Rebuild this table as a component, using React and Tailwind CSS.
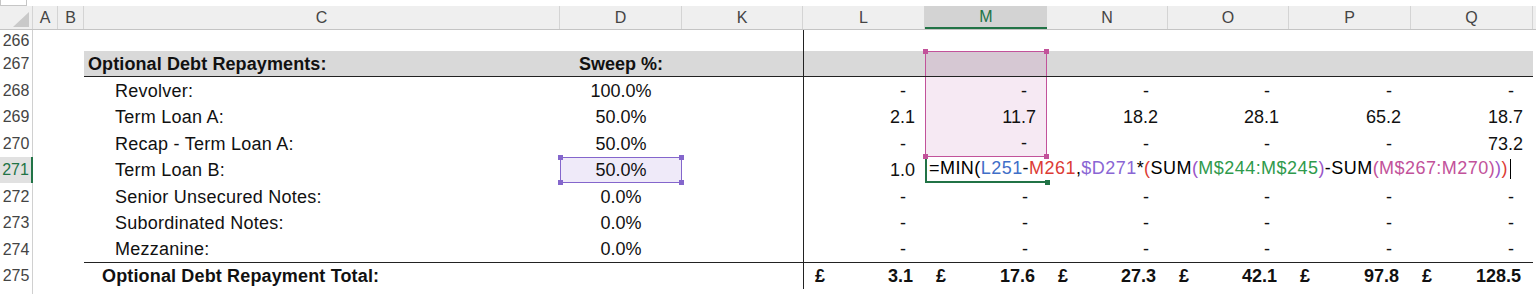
import React from "react";

const VW = ["w-[122px]", "w-[122px]", "w-[121px]", "w-[121px]", "w-[122px]", "w-[122px]"];
const PINK = "border-[#c2529a]";

function RowHead({ n, active }) {
  return active ? (
    <div className="w-[33px] shrink-0 flex items-center justify-center bg-[#e1e1e1] border-r-2 border-[#217346] text-[#217346] text-[16px]">
      {n}
    </div>
  ) : (
    <div className="w-[33px] shrink-0 flex items-center justify-center bg-white border-r border-[#d0d0d0] text-[#444] text-[16px]">
      {n}
    </div>
  );
}

function Handle({ cls }) {
  return <div className={`absolute w-[5px] h-[5px] z-20 ${cls}`} />;
}

function Val({ w, v, extra = "", children }) {
  const dash = v === "-";
  return (
    <div className={`${w} shrink-0 relative flex items-center justify-end ${dash ? "pr-[19px]" : "pr-[10px]"} ${extra}`}>
      {v}
      {children}
    </div>
  );
}

function Blank() {
  return (
    <>
      <div className="w-[25px] shrink-0" />
      <div className="w-[26px] shrink-0" />
    </>
  );
}

const body = [
  { n: 268, h: "h-[27px]", label: "Revolver:", d: "100.0%", v: ["-", "-", "-", "-", "-", "-"], m: "top" },
  { n: 269, h: "h-[26px]", label: "Term Loan A:", d: "50.0%", v: ["2.1", "11.7", "18.2", "28.1", "65.2", "18.7"], m: "mid" },
  { n: 270, h: "h-[27px]", label: "Recap - Term Loan A:", d: "50.0%", v: ["-", "-", "-", "-", "-", "73.2"], m: "bottom" },
];

const lower = [
  { n: 272, h: "h-[27px]", label: "Senior Unsecured Notes:", d: "0.0%" },
  { n: 273, h: "h-[26px]", label: "Subordinated Notes:", d: "0.0%" },
  { n: 274, h: "h-[27px]", label: "Mezzanine:", d: "0.0%", last: true },
];

function mExtra(m) {
  if (m === "bottom") return `bg-[#f6e9f3] border-x border-b ${PINK}`;
  return `bg-[#f6e9f3] border-x ${PINK}`;
}

function ValueCells({ v, m }) {
  return (
    <>
      {v.map((x, i) => {
        if (i === 0) return <Val key={i} w={VW[i]} v={x} extra="border-l border-[#222]" />;
        if (i === 1 && m)
          return (
            <Val key={i} w={VW[i]} v={x} extra={mExtra(m)}>
              {m === "bottom" && (
                <>
                  <Handle cls="-left-[3px] -bottom-[3px] bg-[#c2529a]" />
                  <Handle cls="-right-[3px] -bottom-[3px] bg-[#c2529a]" />
                </>
              )}
            </Val>
          );
        return <Val key={i} w={VW[i]} v={x} />;
      })}
    </>
  );
}

function Formula() {
  return (
    <span className="whitespace-nowrap tracking-[0.45px]">
      <span className="text-black">=MIN(</span>
      <span className="text-[#3f6fc8]">L251</span>
      <span className="text-black">-</span>
      <span className="text-[#dc3b35]">M261</span>
      <span className="text-black">,</span>
      <span className="text-[#8a66d4]">$D271</span>
      <span className="text-black">*</span>
      <span className="text-[#dc3b35]">(</span>
      <span className="text-black">SUM</span>
      <span className="text-[#9a55c8]">(</span>
      <span className="text-[#2f9a4c]">M$244:M$245</span>
      <span className="text-[#9a55c8]">)</span>
      <span className="text-black">-SUM</span>
      <span className="text-[#c2529a]">(M$267:M270)</span>
      <span className="text-[#9a55c8]">)</span>
      <span className="text-[#dc3b35]">)</span>
      <span className="inline-block w-[1px] h-[20px] bg-black ml-[2px] align-middle" />
    </span>
  );
}

export default function App() {
  return (
    <div className="w-[1536px] h-[294px] overflow-hidden bg-white font-['Liberation_Sans',Arial,sans-serif] text-[18px] text-[#111] leading-none">
      {/* top strip */}
      <div className="h-[6px] flex bg-white">
        <div className="w-[27px] h-[6px] border border-t-0 border-[#c6c6c6]" />
      </div>

      {/* column headers */}
      <div className="flex h-[24px] bg-[#efefef] border-b border-[#c4c4c4] text-[16px] text-[#444]">
        <div className="w-[33px] shrink-0 border-r border-[#d4d4d4]">
          <svg width="32" height="23" viewBox="0 0 32 23">
            <polygon points="29,6 29,21 13,21" fill="#c9c9c9" />
          </svg>
        </div>
        <div className="w-[25px] shrink-0 flex items-center justify-center border-r border-[#d4d4d4]">A</div>
        <div className="w-[26px] shrink-0 flex items-center justify-center border-r border-[#d4d4d4]">B</div>
        <div className="w-[476px] shrink-0 flex items-center justify-center border-r border-[#d4d4d4]">C</div>
        <div className="w-[122px] shrink-0 flex items-center justify-center border-r border-[#d4d4d4]">D</div>
        <div className="w-[121px] shrink-0 flex items-center justify-center border-r border-[#d4d4d4]">K</div>
        <div className="w-[122px] shrink-0 flex items-center justify-center border-r border-[#d4d4d4]">L</div>
        <div className="w-[122px] shrink-0 flex items-center justify-center bg-[#d3d3d3] border-b-2 border-[#217346] text-[#217346]">M</div>
        <div className="w-[121px] shrink-0 flex items-center justify-center border-r border-[#d4d4d4]">N</div>
        <div className="w-[121px] shrink-0 flex items-center justify-center border-r border-[#d4d4d4]">O</div>
        <div className="w-[122px] shrink-0 flex items-center justify-center border-r border-[#d4d4d4]">P</div>
        <div className="w-[122px] shrink-0 flex items-center justify-center border-r border-[#d4d4d4]">Q</div>
        <div className="flex-1" />
      </div>

      {/* 266 */}
      <div className="flex h-[21px]">
        <RowHead n={266} />
        <Blank />
        <div className="w-[476px] shrink-0" />
        <div className="w-[122px] shrink-0" />
        <div className="w-[121px] shrink-0" />
        <div className="w-[122px] shrink-0 border-l border-[#222]" />
      </div>

      {/* 267 */}
      <div className="flex h-[26px]">
        <RowHead n={267} />
        <Blank />
        <div className="flex bg-[#d9d9d9] border-b border-[#222]">
          <div className="w-[476px] shrink-0 flex items-center pl-[4px] font-bold tracking-[0.1px]">Optional Debt Repayments:</div>
          <div className="w-[122px] shrink-0 flex items-center justify-center font-bold">Sweep %:</div>
          <div className="w-[121px] shrink-0" />
          <div className="w-[122px] shrink-0 border-l border-[#222]" />
          <div className={`w-[122px] shrink-0 relative bg-[#d6c8d3] border-t border-x ${PINK}`}>
            <Handle cls="-left-[3px] -top-[3px] bg-[#c2529a]" />
            <Handle cls="-right-[3px] -top-[3px] bg-[#c2529a]" />
          </div>
          <div className="w-[121px] shrink-0" />
          <div className="w-[121px] shrink-0" />
          <div className="w-[122px] shrink-0" />
          <div className="w-[122px] shrink-0" />
        </div>
      </div>

      {/* 268-270 */}
      {body.map((r) => (
        <div key={r.n} className={`flex ${r.h}`}>
          <RowHead n={r.n} />
          <Blank />
          <div className="w-[476px] shrink-0 flex items-center pl-[31px] tracking-[0.25px]">{r.label}</div>
          <div className="w-[122px] shrink-0 flex items-center justify-center">{r.d}</div>
          <div className="w-[121px] shrink-0" />
          <ValueCells v={r.v} m={r.m} />
        </div>
      ))}

      {/* 271 */}
      <div className="flex h-[26px]">
        <RowHead n={271} active />
        <Blank />
        <div className="w-[476px] shrink-0 flex items-center pl-[31px] tracking-[0.25px]">Term Loan B:</div>
        <div className="w-[122px] shrink-0 relative flex items-center justify-center border border-[#8466cc] bg-[#efeaf9]">
          50.0%
          <Handle cls="-left-[3px] -top-[3px] bg-[#8466cc]" />
          <Handle cls="-right-[3px] -top-[3px] bg-[#8466cc]" />
          <Handle cls="-left-[3px] -bottom-[3px] bg-[#8466cc]" />
          <Handle cls="-right-[3px] -bottom-[3px] bg-[#8466cc]" />
        </div>
        <div className="w-[121px] shrink-0" />
        <Val w="w-[122px]" v="1.0" extra="border-l border-[#222]" />
        <div className="w-[122px] shrink-0 relative z-10 flex items-center pl-[2px] border-l-2 border-b-2 border-[#217346]">
          <Formula />
          <Handle cls="-right-[3px] -bottom-[4px] bg-[#217346]" />
        </div>
        <div className="w-[121px] shrink-0" />
        <div className="w-[121px] shrink-0" />
        <div className="w-[122px] shrink-0" />
        <div className="w-[122px] shrink-0" />
      </div>

      {/* 272-274 */}
      {lower.map((r) => (
        <div key={r.n} className={`flex ${r.h}`}>
          <RowHead n={r.n} />
          <Blank />
          <div className={`flex ${r.last ? "border-b border-[#222]" : ""}`}>
            <div className="w-[476px] shrink-0 flex items-center pl-[31px] tracking-[0.25px]">{r.label}</div>
            <div className="w-[122px] shrink-0 flex items-center justify-center">{r.d}</div>
            <div className="w-[121px] shrink-0" />
            <ValueCells v={["-", "-", "-", "-", "-", "-"]} />
          </div>
        </div>
      ))}

      {/* 275 */}
      <div className="flex h-[26px] font-bold">
        <div className="w-[33px] shrink-0 flex items-center justify-center bg-white border-r border-[#d0d0d0] text-[#444] text-[16px] font-normal">
          275
        </div>
        <Blank />
        <div className="w-[476px] shrink-0 flex items-center pl-[18px] tracking-[0.15px]">Optional Debt Repayment Total:</div>
        <div className="w-[122px] shrink-0" />
        <div className="w-[121px] shrink-0" />
        {["3.1", "17.6", "27.3", "42.1", "97.8", "128.5"].map((x, i) => (
          <div
            key={i}
            className={`${VW[i]} shrink-0 flex items-center justify-between pl-[11px] pr-[12px] ${i === 0 ? "border-l border-[#222]" : ""}`}
          >
            <span>£</span>
            <span>{x}</span>
          </div>
        ))}
      </div>

      {/* next row, cut off by the window edge */}
      <div className="flex h-[26px]">
        <div className="w-[33px] shrink-0 bg-white border-r border-[#d0d0d0]" />
      </div>
    </div>
  );
}
